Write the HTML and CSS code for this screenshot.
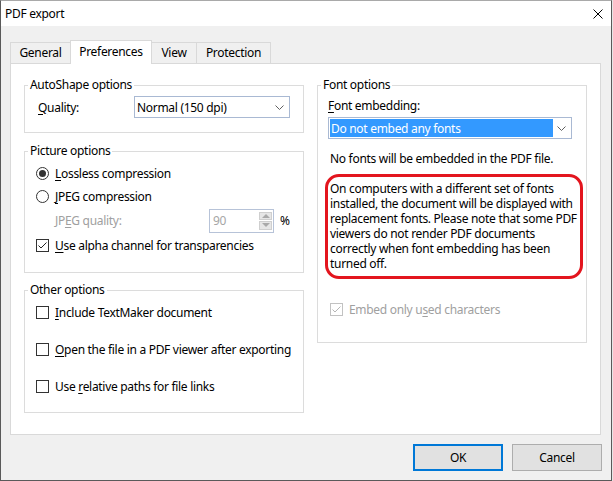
FILE: index.html
```html
<!DOCTYPE html>
<html>
<head>
<meta charset="utf-8">
<link rel="stylesheet" href="styles.css">
</head>
<body>
<div class="window">
  <div class="titlebar">
    <span class="title">PDF export</span>
    <svg class="close" width="10" height="10" viewBox="0 0 10 10"><path d="M0.5,0.5 L9.5,9.5 M9.5,0.5 L0.5,9.5" stroke="#000" stroke-width="1" fill="none"/></svg>
  </div>
  <div class="client">
    <div class="tabs">
      <div class="tab t-general">General</div>
      <div class="tab t-prefs active">Preferences</div>
      <div class="tab t-view">View</div>
      <div class="tab t-prot">Protection</div>
    </div>
    <div class="panel">
      <div class="col-left">
        <fieldset class="group">
          <legend>AutoShape options</legend>
          <div class="gbody g-auto">
            <div class="qrow">
              <span class="qlabel"><u>Q</u>uality:</span>
              <div class="combo q-combo">
                <span class="cval">Normal (150 dpi)</span>
                <span class="carrow"><svg width="9" height="5" viewBox="0 0 9 5"><polyline points="0.5,0.5 4.5,4.5 8.5,0.5" fill="none" stroke="#606060" stroke-width="1"/></svg></span>
              </div>
            </div>
          </div>
        </fieldset>

        <fieldset class="group g2">
          <legend>Picture options</legend>
          <div class="gbody">
            <div class="opt"><span class="radio checked"></span><span><u>L</u>ossless compression</span></div>
            <div class="opt"><span class="radio"></span><span><u>J</u>PEG compression</span></div>
            <div class="opt tall">
              <span class="jq disabled">JP<u>E</u>G quality:</span>
              <div class="spin">
                <span class="spin-val">90</span>
                <span class="spin-btns"><span class="sb"><span class="tri-up"></span></span><span class="sb"><span class="tri-down"></span></span></span>
              </div>
              <span class="pct">%</span>
            </div>
            <div class="opt tall"><span class="check"><svg width="11" height="11" viewBox="0 0 11 11"><polyline points="1.5,5.5 4,8 9.5,2.5" fill="none" stroke="#222" stroke-width="1"/></svg></span><span><u>U</u>se alpha channel for transparencies</span></div>
          </div>
        </fieldset>

        <fieldset class="group g3">
          <legend>Other options</legend>
          <div class="gbody spaced">
            <div class="opt"><span class="check"></span><span><u>I</u>nclude TextMaker document</span></div>
            <div class="opt"><span class="check"></span><span><u>O</u>pen the file in a PDF viewer after exporting</span></div>
            <div class="opt"><span class="check"></span><span>Use <u>r</u>elative paths for file links</span></div>
          </div>
        </fieldset>
      </div>

      <div class="col-right">
        <fieldset class="group">
          <legend>Font options</legend>
          <div class="gbody g-font">
            <div class="flabel"><u>F</u>ont embedding:</div>
            <div class="combo f-combo">
              <span class="cval selected">Do not embed any fonts</span>
              <span class="carrow"><svg width="9" height="5" viewBox="0 0 9 5"><polyline points="0.5,0.5 4.5,4.5 8.5,0.5" fill="none" stroke="#606060" stroke-width="1"/></svg></span>
            </div>
            <p class="nofonts">No fonts will be embedded in the PDF file.</p>
            <div class="note">On computers with a different set of fonts<br>installed, the document will be displayed with<br>replacement fonts. Please note that some PDF<br>viewers do not render PDF documents<br>correctly when font embedding has been<br>turned off.</div>
            <div class="opt embed disabled"><span class="check dis"><svg width="11" height="11" viewBox="0 0 11 11"><polyline points="1.5,5.5 4,8 9.5,2.5" fill="none" stroke="#b5b5b5" stroke-width="1"/></svg></span><span>Embed only u<u>s</u>ed characters</span></div>
          </div>
        </fieldset>
      </div>
    </div>
    <div class="buttons">
      <button class="btn ok">OK</button>
      <button class="btn">Cancel</button>
    </div>
  </div>
</div>
</body>
</html>
```
FILE: styles.css
```css
* { box-sizing: border-box; }
html, body { margin: 0; padding: 0; }
body {
  width: 613px;
  height: 481px;
  overflow: hidden;
  background: #e6e6e6;
  font-family: "Noto Sans", "Open Sans", sans-serif;
  font-size: 12px;
  letter-spacing: -0.3px;
  color: #000;
}
.window {
  width: 612px;
  height: 481px;
  border-top: 1px solid #a9a9a9;
  border-left: 1px solid #5a5a5a;
  border-right: 1px solid #5a5a5a;
  border-bottom: 1px solid #5a5a5a;
  display: flex;
  flex-direction: column;
  background: #f0f0f0;
}
.titlebar {
  height: 25px;
  background: #fff;
  display: flex;
  align-items: center;
  justify-content: space-between;
  padding: 0 8px 0 4px;
}
.title { line-height: 16px; }
.close { display: block; }
.client {
  flex: 1;
  padding-top: 14px;
  display: flex;
  flex-direction: column;
}
.tabs {
  display: flex;
  align-items: flex-end;
  height: 23px;
  padding-left: 9px;
}
.tab {
  height: 21px;
  border: 1px solid #d9d9d9;
  border-bottom: none;
  background: #f0f0f0;
  margin-left: -1px;
  display: flex;
  align-items: center;
  justify-content: center;
  line-height: 16px;
}
.t-general { width: 61px; margin-left: 0; }
.t-prefs { width: 82px; }
.t-view { width: 46px; }
.t-prot { width: 75px; }
.tab.active {
  height: 24px;
  background: #fff;
  margin-bottom: -1px;
  padding-bottom: 1px;
  position: relative;
  z-index: 1;
}
.panel {
  height: 372px;
  margin: 0 10px 0 9px;
  background: #fff;
  border: 1px solid #d9d9d9;
  display: flex;
  gap: 13px;
  padding: 13px 0 0 13px;
}
.col-left { width: 280px; display: flex; flex-direction: column; }
.col-right { width: 270px; }
fieldset.group {
  margin: 0;
  padding: 0;
  border: 1px solid #dcdcdc;
  min-width: 0;
}
fieldset.g2 { margin-top: 10px; }
fieldset.g3 { margin-top: 9px; }
legend {
  margin-left: 3px;
  padding: 0 2px;
  line-height: 16px;
}
.gbody { padding: 3px 13px 14px 11px; }
.gbody.spaced { display: flex; flex-direction: column; gap: 14px; }
.qrow { display: flex; align-items: center; height: 22px; }
.qlabel { width: 96px; margin-left: 2px; }
.combo {
  height: 22px;
  border: 1px solid #a9b9d3;
  background: #fff;
  display: flex;
  align-items: stretch;
  padding: 1px;
}
.q-combo { width: 156px; }
.cval {
  flex: 1;
  display: flex;
  align-items: center;
  padding-left: 1px;
  white-space: nowrap;
}
.cval.selected { background: #3399ff; color: #fff; }
.carrow { width: 17px; display: flex; align-items: center; justify-content: center; }
.carrow svg { display: block; }
.opt { display: flex; align-items: center; height: 23px; white-space: nowrap; }
.opt.tall { height: 25px; }
.radio {
  width: 13px;
  height: 13px;
  border: 1px solid #333;
  border-radius: 50%;
  margin-right: 6px;
  display: flex;
  align-items: center;
  justify-content: center;
  flex: none;
}
.radio.checked::after {
  content: "";
  width: 7px;
  height: 7px;
  border-radius: 50%;
  background: #333;
}
.check {
  width: 13px;
  height: 13px;
  border: 1px solid #333;
  background: #fff;
  margin-right: 6px;
  flex: none;
  display: flex;
  align-items: center;
  justify-content: center;
}
.check svg { display: block; }
.check.dis { border-color: #c2c2c2; }
.disabled { color: #a0a0a0; }
.jq { width: 173px; padding-left: 19px; }
.spin {
  width: 65px;
  height: 24px;
  border: 1px solid #b7c3d8;
  display: flex;
  padding: 1px;
}
.spin-val { flex: 1; color: #a6a6a6; display: flex; align-items: center; padding-left: 2px; }
.spin-btns { width: 13px; display: flex; flex-direction: column; gap: 1px; padding: 1px 0; }
.sb {
  flex: 1;
  background: #e6e6e6;
  border: 1px solid #cfcfcf;
  display: flex;
  align-items: center;
  justify-content: center;
}
.tri-up { width: 0; height: 0; border-left: 4px solid transparent; border-right: 4px solid transparent; border-bottom: 4px solid #a9a9a9; }
.tri-down { width: 0; height: 0; border-left: 4px solid transparent; border-right: 4px solid transparent; border-top: 4px solid #a9a9a9; }
.pct { margin-left: 6px; }
.g-font { padding: 0 14px 21px 10px; }
.flabel { margin-top: 5px; line-height: 16px; }
.f-combo { margin-top: 3px; }
.nofonts { margin: 12px 0 0 2px; line-height: 16px; }
.note {
  margin: 7px -11px 0 -3px;
  border: 3px solid #e3151e;
  border-radius: 14px;
  padding: 4px 2px 5px 2px;
  line-height: 15px;
  white-space: nowrap;
}
.embed { margin-top: 19px; margin-left: 2px; }
.buttons {
  display: flex;
  justify-content: flex-end;
  gap: 9px;
  margin: 9px 9px 0 0;
}
.btn {
  width: 90px;
  height: 27px;
  background: #e1e1e1;
  border: 1px solid #adadad;
  font-family: inherit;
  font-size: 12px;
  letter-spacing: inherit;
  color: #000;
  padding: 0;
}
.btn.ok { border: 2px solid #0078d7; }
u { text-underline-offset: 2px; }
```
